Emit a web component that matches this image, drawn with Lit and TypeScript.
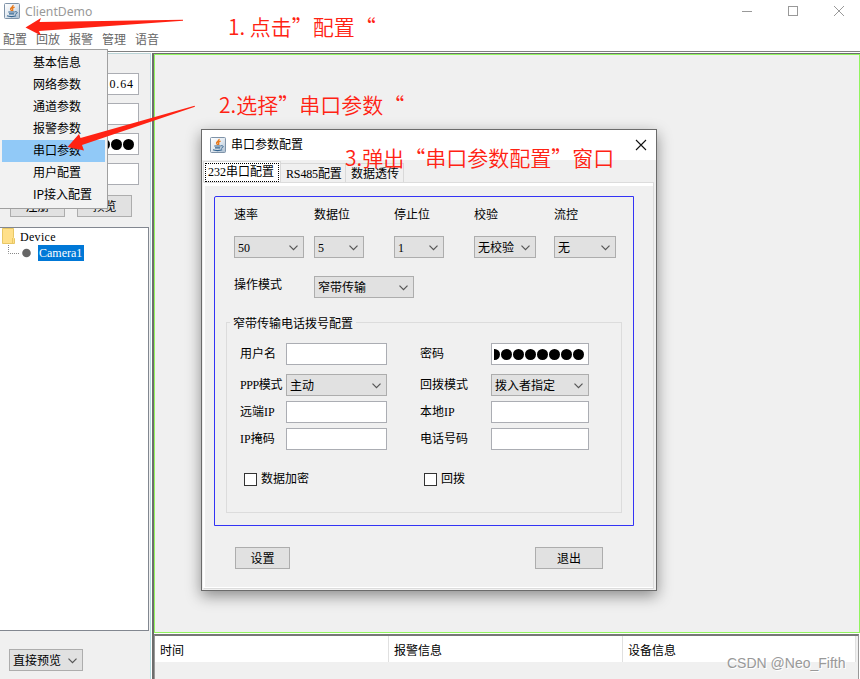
import { LitElement, html, css, svg } from "lit";
import { customElement, property } from "lit/decorators.js";

const javaIcon = html`<svg width="16" height="16" viewBox="0 0 16 16">
  <defs>
    <linearGradient id="g" x1="0" y1="0" x2="1" y2="1">
      <stop offset="0" stop-color="#fff" /><stop offset="0.5" stop-color="#e3eaf1" /><stop offset="1" stop-color="#a9bdd0" />
    </linearGradient>
  </defs>
  <rect x="0.5" y="0.5" width="15" height="15" rx="1" fill="url(#g)" stroke="#7f93a8" />
  <path d="M9 2C9.800 4 6 4.600 6.600 6.300L7.600 8M10.600 4.200C8.300 5 7.900 5.800 8.800 6.900L8.500 8" fill="none" stroke="#e8791c" stroke-width="1.400" />
  <path d="M4.300 9h6.500M5 10.800h5.200M3 12.800c2 1 7 1 9.200 0" fill="none" stroke="#34648f" stroke-width="1.200" />
  <path d="M11 8.800c3-.6 2.700 1.900.2 2.500" fill="none" stroke="#34648f" />
</svg>`;

@customElement("ui-combo")
class UiCombo extends LitElement {
  @property() value = "";
  static styles = css`
    :host { display: flex; box-sizing: border-box; height: 22px; border: 1px solid #adadad; background: #e1e1e1;
      align-items: center; justify-content: space-between; padding: 2px 5px 0 3px; white-space: nowrap; }
    svg { flex: none; }
  `;
  render() {
    return html`<span>${this.value}</span>
      <svg width="9" height="6" viewBox="0 0 9 6">${svg`<path d="M0.500 0.700L4.500 4.700L8.500 0.700" fill="none" stroke="#555" stroke-width="1.200"/>`}</svg>`;
  }
}

@customElement("ui-field")
class UiField extends LitElement {
  @property() value = "";
  @property({ type: Number }) dots = 0;
  static styles = css`
    :host { display: flex; box-sizing: border-box; height: 22px; border: 1px solid #abadb3; background: #fff;
      align-items: center; justify-content: flex-end; padding: 0 4px 0 2px; overflow: hidden; letter-spacing: 0.9px; }
    .mask { display: flex; justify-content: flex-end; overflow: hidden; width: 100%; gap: 1px; }
    .dot { flex: none; width: 11px; height: 11px; border-radius: 50%; background: #000; }
  `;
  render() {
    return this.dots
      ? html`<div class="mask">${Array.from({ length: this.dots }, () => html`<i class="dot"></i>`)}</div>`
      : html`<span>${this.value}</span>`;
  }
}

@customElement("serial-dialog")
class SerialDialog extends LitElement {
  static styles = css`
    :host { display: flex; flex-direction: column; box-sizing: border-box; width: 456px; height: 462px;
      border: 1px solid #6b6b6b; background: #f0f0f0; box-shadow: 0 5px 14px rgba(0, 0, 0, 0.42); }
    .title { display: flex; align-items: center; height: 30px; background: #fff; padding: 0 8px 1px; flex: none; box-sizing: border-box; }
    .title span { margin-left: 5px; flex: 1; }
    .close { margin-right: 1px; }
    .tabs { display: flex; align-items: flex-end; height: 22px; padding-left: 1px; flex: none; }
    .tab { box-sizing: border-box; height: 19px; line-height: 21px; border: 1px solid #d9d9d9; border-width: 1px 1px 0 0; padding: 0 4px 0 5px; white-space: nowrap; }
    .rs { width: 65px; letter-spacing: -0.15px; }
    .tab.on { height: 21px; background: #fff; padding: 1px; width: 78px; border-left-width: 1px; }
    .focus { border: 1px dotted #000; height: 17px; line-height: 17px; padding-left: 2px; display: block; }
    .pane { flex: 1; box-sizing: border-box; border: 1px solid #dcdcdc; border-left-color: #fff; margin: 0 2px 1px 1px; box-shadow: inset 0 3px #fff, inset 0 -1px #fff, inset 1px 0 #fff; padding: 13px 19px 0 10px; }
    .blue { box-sizing: border-box; height: 330px; border: 1px solid #3333f5; border-radius: 2px 0 0 0; padding: 9px 11px 0; }
    .speeds { display: grid; grid-template-columns: 80px 80px 80px 80px 62px; padding-left: 8px; }
    .cell { display: flex; flex-direction: column; align-items: flex-start; gap: 12px; line-height: 18px; }
    .w70 { width: 70px; } .w50 { width: 50px; } .w62 { width: 62px; }
    .mode { display: flex; padding: 18px 0 0 8px; line-height: 18px; }
    .mode span { width: 80px; }
    .mode ui-combo { width: 100px; }
    .group { margin: 15px 0 0; border: 1px solid #dcdcdc; box-sizing: border-box; height: 200px; padding: 0 0 0 13px; min-width: 0; }
    legend { margin-left: -10px; padding: 0 3px; height: 18px; line-height: 22px; }
    .grid { display: grid; grid-template-columns: 46px 101px 33px 71px 98px; grid-template-rows: 31px 27px 27px 22px; padding-top: 12px; line-height: 22px; white-space: nowrap; }
    .ppp { letter-spacing: -0.4px; }
    .lr { grid-column: 4; }
    .checks { display: flex; padding: 20px 0 0 4px; line-height: 18px; }
    .check { width: 180px; display: flex; align-items: center; gap: 4px; }
    .box { width: 11px; height: 11px; border: 1px solid #333; background: #fff; }
    .actions { display: flex; justify-content: space-between; padding: 21px 10px 0 20px; margin: 0 1px 0 1px; }
    .btn { box-sizing: border-box; height: 22px; line-height: 22px; width: 55px; border: 1px solid #adadad; background: #e1e1e1; text-align: center; }
    .btn.wide { width: 68px; margin-right: 20px; }
  `;
  render() {
    const speeds = [["速率", "50", "w70"], ["数据位", "5", "w50"], ["停止位", "1", "w50"], ["校验", "无校验", "w62"], ["流控", "无", "w62"]];
    return html`
      <div class="title">${javaIcon}<span>串口参数配置</span>
        <svg class="close" width="12" height="12" viewBox="0 0 12 12"><path d="M1 1L11 11M11 1L1 11" stroke="#111" stroke-width="1.100" /></svg>
      </div>
      <div class="tabs">
        <div class="tab on"><span class="focus">232串口配置</span></div>
        <div class="tab rs">RS485配置</div>
        <div class="tab">数据透传</div>
      </div>
      <div class="pane">
        <div class="blue">
          <div class="speeds">
            ${speeds.map(([l, v, w]) => html`<div class="cell"><span>${l}</span><ui-combo class=${w} .value=${v}></ui-combo></div>`)}
          </div>
          <div class="mode"><span>操作模式</span><ui-combo value="窄带传输"></ui-combo></div>
          <fieldset class="group">
            <legend>窄带传输电话拨号配置</legend>
            <div class="grid">
              <span>用户名</span><ui-field></ui-field><span class="lr">密码</span><ui-field dots="8"></ui-field>
              <span class="ppp">PPP模式</span><ui-combo value="主动"></ui-combo><span class="lr">回拨模式</span><ui-combo value="拨入者指定"></ui-combo>
              <span>远端IP</span><ui-field></ui-field><span class="lr">本地IP</span><ui-field></ui-field>
              <span>IP掩码</span><ui-field></ui-field><span class="lr">电话号码</span><ui-field></ui-field>
            </div>
            <div class="checks">
              <div class="check"><i class="box"></i>数据加密</div>
              <div class="check"><i class="box"></i>回拨</div>
            </div>
          </fieldset>
        </div>
        <div class="actions"><div class="btn">设置</div><div class="btn wide">退出</div></div>
      </div>`;
  }
}

@customElement("app-root")
class AppRoot extends LitElement {
  static styles = css`
    :host { display: flex; flex-direction: column; position: relative; width: 860px; height: 679px; overflow: hidden;
      background: #fff; color: #000; font: 12px/18px "Liberation Serif", "Noto Sans CJK SC", sans-serif; }
    .titlebar { display: flex; align-items: flex-start; height: 28px; padding: 3px 15px 0 4px; box-sizing: border-box; color: #999; font-family: "Noto Sans", "Noto Sans CJK SC", sans-serif; }
    .titlebar .name { margin-left: 5px; flex: 1; font-size: 12.200px; }
    .winbtns { display: flex; gap: 34px; padding-top: 2px; }
    .menubar { display: flex; gap: 9px; height: 23px; padding-left: 3px; line-height: 22px; color: #666; font-family: "Noto Sans CJK SC", sans-serif; border-bottom: 1px solid #808080; }
    .body { flex: 1; display: flex; min-height: 0; padding-top: 1px; }
    .left { width: 151px; box-sizing: border-box; border-right: 1px solid #b5dfe2; border-top: 1px solid #b9d3d6; display: flex; flex-direction: column; background: #f0f0f0; }
    .form { height: 173px; display: flex; flex-direction: column; gap: 8px; padding: 19px 11px 0 60px; box-sizing: border-box; }
    .btns { display: flex; gap: 12px; margin: 2px -4px 0 -50px; }
    .btn { box-sizing: border-box; width: 55px; height: 22px; line-height: 22px; border: 1px solid #adadad; background: #e1e1e1; text-align: center; }
    .tree { height: 404px; box-sizing: border-box; border: 1px solid #828790; border-left: 0; background: #fff; margin-right: 1px; letter-spacing: 0.3px; }
    .node { display: flex; align-items: center; height: 17px; }
    .node span { margin-left: 4px; }
    .sel { height: 16px; }
    .node .pick { background: #0078d7; color: #fff; height: 16px; line-height: 17px; margin-left: 6px; width: 45px; padding-left: 1px; letter-spacing: 0; display: block; }
    .bottom { padding: 18px 0 0 9px; }
    .bottom ui-combo { width: 74px; }
    .right { flex: 1; margin-left: 1px; display: flex; flex-direction: column; min-width: 0; border-left: 2px solid #6d6d6d; }
    .view { height: 579px; box-sizing: border-box; background: #f0f0f0; border: 1px solid #91f55f; box-shadow: 0 -1px #6d6d6d; margin-top: 1px; flex: none; }
    .table { flex: 1; border: 1px solid #999; border-top: 2px solid #777; border-bottom: 0; background: #f0f0f0; margin: 1px 1px 0 0; }
    .head { display: grid; grid-template-columns: 234px 234px 1fr; grid-template-rows: 26px; height: 26px; background: #fff; line-height: 31px; margin-right: 2px; overflow: hidden; }
    .head span { border-right: 1px solid #e0e0e0; padding-left: 5px; }
    .menu { position: absolute; left: 0; top: 49px; width: 108px; height: 160px; border: 1px solid #a0a0a0; border-left: 0; box-sizing: border-box; padding: 2px 2px 0; background: #f2f2f2; font-family: "Noto Sans CJK SC", sans-serif; }
    .item { height: 22px; line-height: 20px; padding-left: 31px; }
    .item.on { background: #91c9f7; }
    serial-dialog { position: absolute; left: 201px; top: 129px; }
    .arrows { position: absolute; left: 0; top: 0; }
    .note { position: absolute; color: #ff2213; font: 350 21px/30px "Noto Sans CJK SC", sans-serif; white-space: pre; }
    .n1 { left: 228px; top: 11px; }
    .n2 { left: 219px; top: 89px; }
    .n3 { left: 345px; top: 142px; }
    .mark { position: absolute; left: 727px; top: 654px; font: 14px/18px "Liberation Sans", sans-serif; color: #999; text-shadow: 1px 1px #fff; white-space: nowrap; }
  `;
  render() {
    const items = ["基本信息", "网络参数", "通道参数", "报警参数", "串口参数", "用户配置", "IP接入配置"];
    return html`
      <div class="titlebar">${javaIcon}<span class="name">ClientDemo</span>
        <div class="winbtns">
          <svg width="12" height="12" viewBox="0 0 12 12"><path d="M1 6.500h10" stroke="#999" /></svg>
          <svg width="12" height="12" viewBox="0 0 12 12"><rect x="1.500" y="1.500" width="9" height="9" fill="none" stroke="#999" /></svg>
          <svg width="12" height="12" viewBox="0 0 12 12"><path d="M1 1L11 11M11 1L1 11" stroke="#999" /></svg>
        </div>
      </div>
      <div class="menubar">${["配置", "回放", "报警", "管理", "语音"].map((t) => html`<span>${t}</span>`)}</div>
      <div class="body">
        <div class="left">
          <div class="form">
            <ui-field value="192.0.0.64"></ui-field><ui-field></ui-field><ui-field dots="5"></ui-field><ui-field></ui-field>
            <div class="btns"><div class="btn">注册</div><div class="btn">预览</div></div>
          </div>
          <div class="tree">
            <div class="node"><svg width="16" height="17" viewBox="0 0 16 17"><path d="M2.500 .500h11v9l1 1v5h-12z" fill="#ffe08a" stroke="#e8c765" /><path d="M12.500 10v6" stroke="#e8c765" /></svg><span>Device</span></div>
            <div class="node sel"><svg width="32" height="16" viewBox="0 0 32 16"><path d="M8.500 0v8.500H20" fill="none" stroke="#888" stroke-dasharray="1 1" /><circle cx="26.500" cy="8" r="4.300" fill="#666" /></svg><span class="pick">Camera1</span></div>
          </div>
          <div class="bottom"><ui-combo value="直接预览"></ui-combo></div>
        </div>
        <div class="right">
          <div class="view"></div>
          <div class="table"><div class="head"><span>时间</span><span>报警信息</span><span>设备信息</span></div></div>
        </div>
      </div>
      <div class="menu">${items.map((t, i) => html`<div class="item ${i === 4 ? "on" : ""}">${t}</div>`)}</div>
      <serial-dialog></serial-dialog>
      <svg class="arrows" width="200" height="160" viewBox="0 0 200 160" fill="#ff2213">
        <path d="M25.500 27.500L41 18L39.500 22L183 19.800L183 20.800L39 31L41 35.500Z" />
        <path d="M67.500 147L79 134L80.500 138L194.500 105.700L195 106.700L82 145L84 150.500Z" />
      </svg>
      <div class="note n1">1. 点击”配置“</div>
      <div class="note n2">2.选择”串口参数“</div>
      <div class="note n3">3.弹出“串口参数配置”窗口</div>
      <div class="mark">CSDN @Neo_Fifth</div>`;
  }
}
